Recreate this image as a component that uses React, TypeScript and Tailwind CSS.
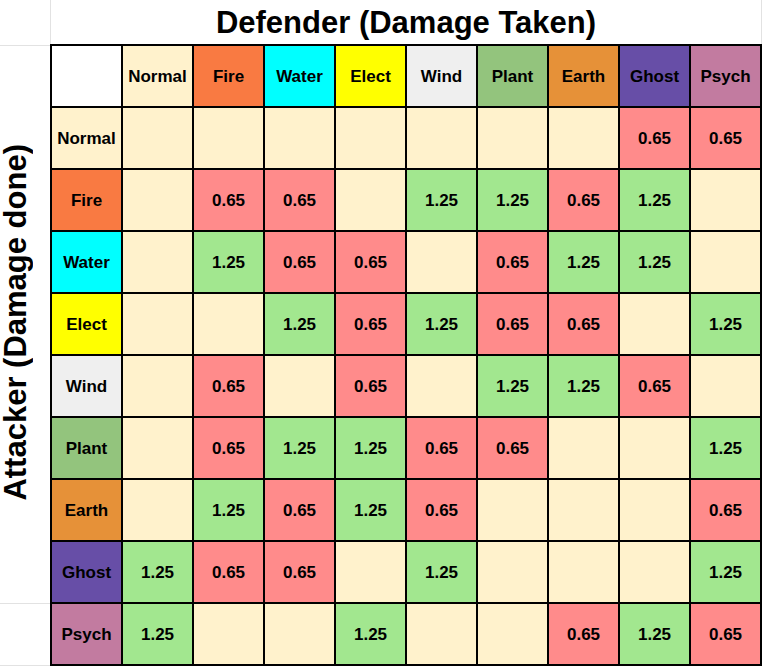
const TYPES = [
  { name: "Normal", bg: "bg-[#fff2cc]" },
  { name: "Fire", bg: "bg-[#f97a42]" },
  { name: "Water", bg: "bg-[#00ffff]" },
  { name: "Elect", bg: "bg-[#ffff00]" },
  { name: "Wind", bg: "bg-[#efefef]" },
  { name: "Plant", bg: "bg-[#93c47d]" },
  { name: "Earth", bg: "bg-[#e69138]" },
  { name: "Ghost", bg: "bg-[#674ea7]" },
  { name: "Psych", bg: "bg-[#c27ba0]" },
];

// attacker rows x defender columns, "" = neutral
const CHART: string[][] = [
  ["", "", "", "", "", "", "", "0.65", "0.65"],
  ["", "0.65", "0.65", "", "1.25", "1.25", "0.65", "1.25", ""],
  ["", "1.25", "0.65", "0.65", "", "0.65", "1.25", "1.25", ""],
  ["", "", "1.25", "0.65", "1.25", "0.65", "0.65", "", "1.25"],
  ["", "0.65", "", "0.65", "", "1.25", "1.25", "0.65", ""],
  ["", "0.65", "1.25", "1.25", "0.65", "0.65", "", "", "1.25"],
  ["", "1.25", "0.65", "1.25", "0.65", "", "", "", "0.65"],
  ["1.25", "0.65", "0.65", "", "1.25", "", "", "", "1.25"],
  ["1.25", "", "", "1.25", "", "", "0.65", "1.25", "0.65"],
];

function cellBg(v: string) {
  if (v === "0.65") return "bg-[#ff8b8b]";
  if (v === "1.25") return "bg-[#a2e78f]";
  return "bg-[#fff2cc]";
}

function Cell({ bg, children }: { bg: string; children?: React.ReactNode }) {
  return (
    <div className={`${bg} h-[60px] pt-[2px] flex items-center justify-center text-[17px] font-bold text-black`}>
      {children}
    </div>
  );
}

export default function App() {
  return (
    <div className="w-[764px] h-[668px] bg-white overflow-hidden flex font-['Liberation_Sans',Arial,sans-serif] text-black">
      {/* column A */}
      <div className="w-[50px] flex flex-col shrink-0">
        <div className="h-[46px] border-b border-[#e2e2e2]" />
        <div className="h-[558px] border-b border-[#e2e2e2] flex items-center justify-center pr-[18px] pb-[4px]">
          <span className="[writing-mode:vertical-rl] rotate-180 text-[31px] font-bold whitespace-nowrap leading-[30px]">
            Attacker (Damage done)
          </span>
        </div>
        <div className="h-[62px] border-b border-[#e2e2e2]" />
      </div>

      {/* title + chart */}
      <div className="w-[712px] flex flex-col shrink-0">
        <div className="h-[44px] border-l border-r border-[#e2e2e2] flex justify-center items-start">
          <h1 className="text-[31px] font-bold leading-normal whitespace-nowrap">Defender (Damage Taken)</h1>
        </div>
        <div className="bg-black p-[2px] grid grid-cols-10 gap-[2px]">
          <Cell bg="bg-white" />
          {TYPES.map((t) => (
            <Cell key={t.name} bg={t.bg}>{t.name}</Cell>
          ))}
          {TYPES.map((t, r) => (
            <>
              <Cell key={`h-${t.name}`} bg={t.bg}>{t.name}</Cell>
              {CHART[r].map((v, c) => (
                <Cell key={`${r}-${c}`} bg={cellBg(v)}>{v}</Cell>
              ))}
            </>
          ))}
        </div>
      </div>
    </div>
  );
}
